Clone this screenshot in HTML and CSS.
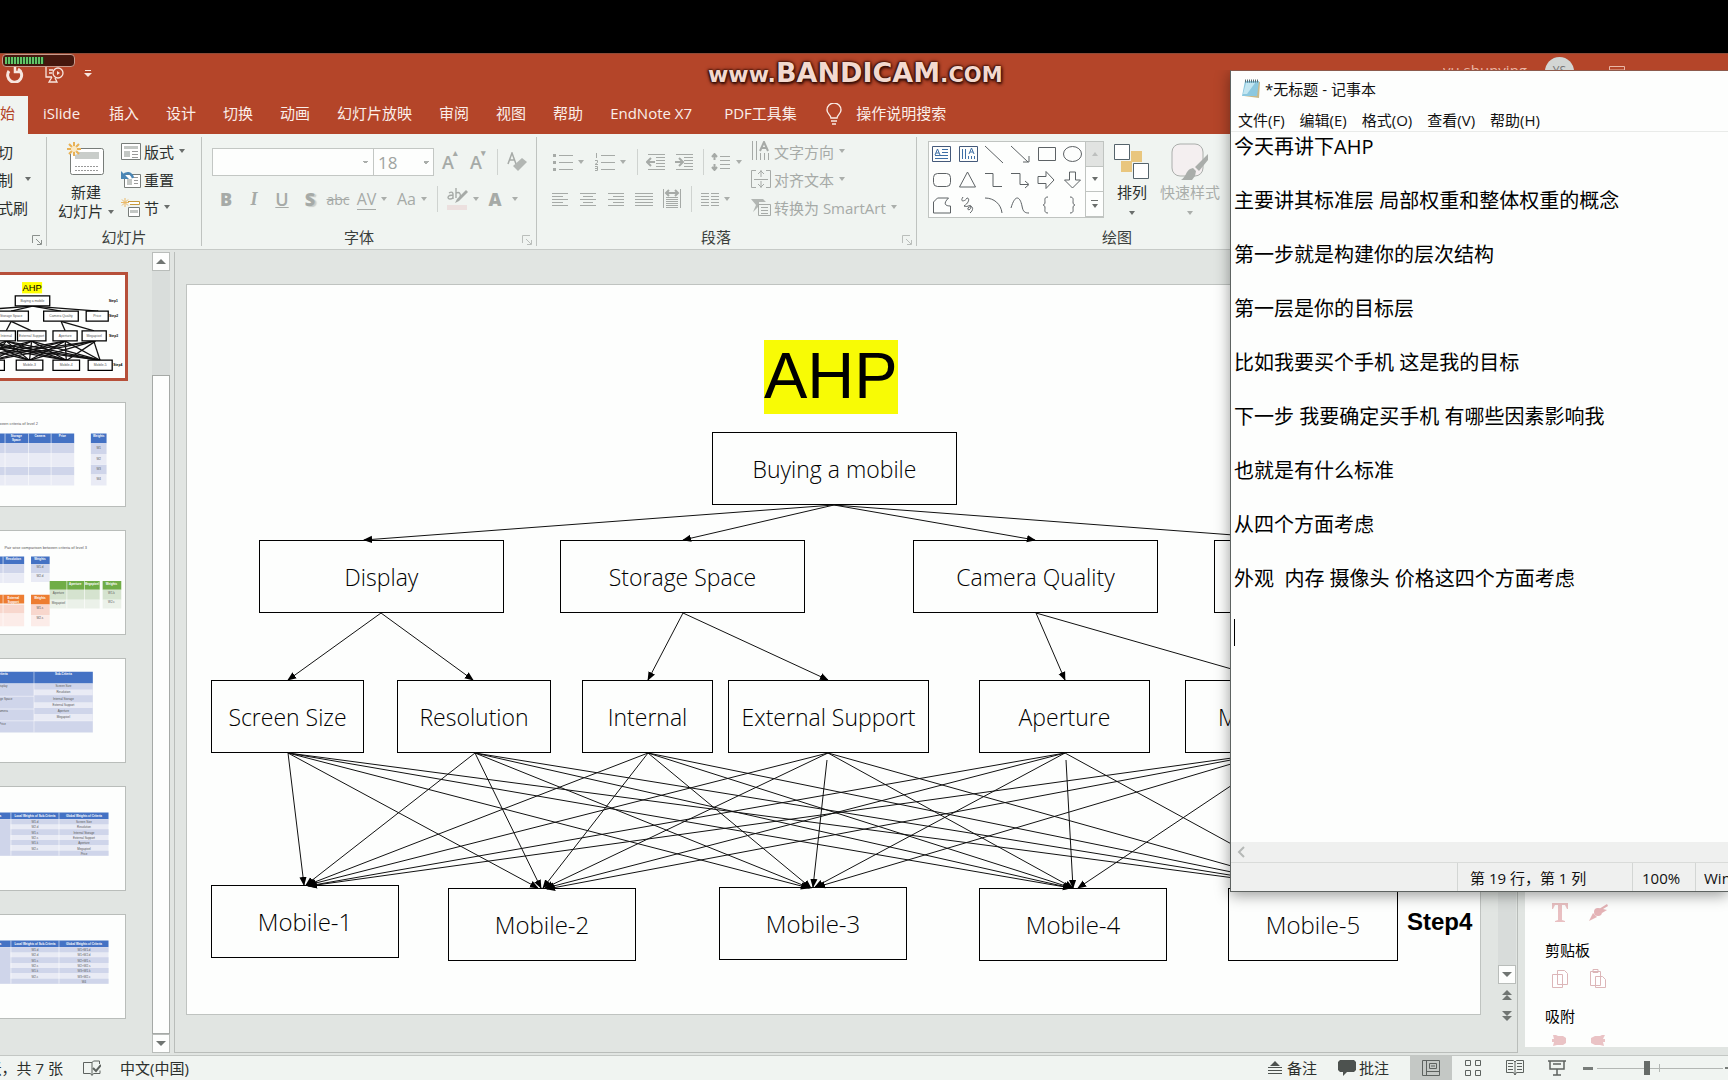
FILE: index.html
```html
<!DOCTYPE html>
<html lang="zh-CN">
<head>
<meta charset="utf-8">
<title>AHP - PowerPoint</title>
<link rel="stylesheet" href="styles.css">
</head>
<body>
<svg class="defs" width="0" height="0" aria-hidden="true">
  <defs>
    <marker id="tip" viewBox="0 0 10 10" refX="9" refY="5" markerWidth="9" markerHeight="9" markerUnits="userSpaceOnUse" orient="auto"><path d="M0 1 10 5 0 9z"/></marker>
    <g id="links" fill="none" stroke="#111">
      <g>
        <path marker-end="url(#tip)" d="M834 505 364 540"/><path marker-end="url(#tip)" d="M834 505 683 540"/><path marker-end="url(#tip)" d="M834 505 1035 540"/><path marker-end="url(#tip)" d="M834 505 1300 540"/>
        <path marker-end="url(#tip)" d="M381 613 288 680"/><path marker-end="url(#tip)" d="M381 613 473 680"/><path marker-end="url(#tip)" d="M683 613 648 680"/><path marker-end="url(#tip)" d="M683 613 828 680"/><path marker-end="url(#tip)" d="M1036 613 1065 680"/><path marker-end="url(#tip)" d="M1036 613 1270 680"/>
        <path marker-end="url(#tip)" d="M288 753 304 885"/><path marker-end="url(#tip)" d="M288 753 538 888"/><path marker-end="url(#tip)" d="M288 753 809 888"/><path marker-end="url(#tip)" d="M288 753 1071 888"/><path marker-end="url(#tip)" d="M288 753 1310 888"/>
        <path marker-end="url(#tip)" d="M475 753 306 885"/><path marker-end="url(#tip)" d="M475 753 541 888"/><path marker-end="url(#tip)" d="M475 753 810 888"/><path marker-end="url(#tip)" d="M475 753 1071 888"/><path marker-end="url(#tip)" d="M475 753 1310 888"/>
        <path marker-end="url(#tip)" d="M648 753 307 885"/><path marker-end="url(#tip)" d="M648 753 543 888"/><path marker-end="url(#tip)" d="M648 753 811 888"/><path marker-end="url(#tip)" d="M648 753 1072 888"/><path marker-end="url(#tip)" d="M648 753 1310 888"/>
        <path marker-end="url(#tip)" d="M828 753 308 885"/><path marker-end="url(#tip)" d="M828 753 545 888"/><path marker-end="url(#tip)" d="M827 760 813 887"/><path marker-end="url(#tip)" d="M828 753 1073 888"/><path marker-end="url(#tip)" d="M828 753 1310 888"/>
        <path marker-end="url(#tip)" d="M1065 753 308 886"/><path marker-end="url(#tip)" d="M1065 753 546 888"/><path marker-end="url(#tip)" d="M1065 753 815 887"/><path marker-end="url(#tip)" d="M1066 760 1073 888"/><path marker-end="url(#tip)" d="M1065 753 1312 888"/>
        <path marker-end="url(#tip)" d="M1268 753 309 886"/><path marker-end="url(#tip)" d="M1268 753 547 889"/><path marker-end="url(#tip)" d="M1268 753 817 887"/><path marker-end="url(#tip)" d="M1280 753 1078 888"/><path marker-end="url(#tip)" d="M1268 753 1312 888"/>
      </g>
    </g>
    <g id="weights-grid">
      <path fill="#4472c4" d="M-61 26H110V33H-61z"/>
      <path fill="#e9ebf5" d="M-61 33H110V70H-61z"/>
      <path fill="#cfd5ea" d="M-61 33H10V70H-61zM10 33H110V38H10zM10 43H110V49H10zM10 54H110V59H10zM10 65H110V70H10z"/>
      <path stroke="#fff" d="M10.500 26V70M59.500 26V70" stroke-width=".6"/>
      <g class="th"><text x="-8" y="31">Sub-Criteria</text><text x="35" y="31">Local Weights of Sub-Criteria</text><text x="85" y="31">Global Weights of Criteria</text></g>
      <g class="td"><text x="35" y="37">W1.d</text><text x="35" y="42">W2.d</text><text x="35" y="48">W1.s</text><text x="35" y="53">W2.s</text><text x="35" y="58">W1.k</text><text x="35" y="64">W2.c</text></g>
    </g>
  </defs>
</svg>

<div class="app">
  <div class="blackbar"></div>

  <header class="titlebar">
    <div class="quick">
      <button aria-label="重做"><svg width="18" height="18" viewBox="0 0 18 18" fill="none" stroke="#f7e6df" stroke-width="3"><path d="M3 6a7 7 0 1 0 9-2"/><path d="M9 1v6h7" stroke-width="2.500"/></svg></button>
      <button aria-label="从头开始"><svg width="20" height="18" viewBox="0 0 20 18" fill="none" stroke="#f7e6df" stroke-width="1.300"><path d="M0 1h17M2 1v11h6M5 5h4M5 8h3M8 12l-3 5h8l-2-4"/><circle cx="14" cy="8" r="5"/><path d="M13 6v4l3-2z" fill="#f7e6df" stroke="none"/></svg></button>
      <button aria-label="自定义"><svg width="8" height="8" viewBox="0 0 8 8"><path d="M1 0h6v1H1zM0 3h8L4 7z" fill="#f7e6df"/></svg></button>
    </div>
    <div class="bandicam">www.<b>BANDICAM</b>.<small>COM</small></div>
    <div class="account"><span>yu shunying</span><i class="avatar">YS</i>
      <svg width="16" height="12" viewBox="0 0 16 12" fill="none" stroke="#eab7a6"><path d="M.5.5h15v11H.5zM.5 4h15"/></svg>
    </div>
    <div class="meter"><span></span></div>
  </header>

  <nav class="tabs">
    <button class="home"><span>开始</span></button><button class="islide">iSlide</button><button>插入</button><button>设计</button><button>切换</button><button>动画</button><button>幻灯片放映</button><button>审阅</button><button>视图</button><button>帮助</button><button class="endnote">EndNote X7</button><button class="pdf">PDF工具集</button>
    <button class="tell"><svg width="16" height="22" viewBox="0 0 16 22" fill="none" stroke="#f9eae4" stroke-width="1.400"><path d="M5 15c0-3-4-4-4-8a7 7 0 0 1 14 0c0 4-4 5-4 8zM5 18h6M6 21h4"/></svg>操作说明搜索</button>
  </nav>

  <section class="ribbon">
    <div class="group clip">
      <div class="stack"><button><span>剪切</span></button><button><span>复制</span><i class="dd"></i></button><button><span>格式刷</span></button></div>
      <footer><svg class="launch" viewBox="0 0 10 10"><path d="M.5 8V.5H8M4 4l5 5M9.500 5v4.500H5"/></svg></footer>
    </div>

    <div class="group slides">
      <div class="content">
        <button class="big"><svg width="38" height="34" viewBox="0 0 38 34"><rect x="3.500" y="6.500" width="33" height="26" rx="2" fill="#fff" stroke="#777c79"/><path fill="#c9cdca" d="M8 10h24v7H8z"/><path stroke="#999" stroke-dasharray="2 1" d="M8 24.500h24M8 28.500h24"/><circle cx="7" cy="7" r="6" fill="#f0f4f1"/><g stroke="#e8b155" stroke-width="2"><path d="M7 0v14M0 7h14M2 2l10 10M12 2 2 12"/></g><circle cx="7" cy="7" r="3" fill="#fbe9c3"/></svg>新建<br>幻灯片<i class="dd"></i></button>
        <div class="stack">
          <button><svg width="20" height="17" viewBox="0 0 20 17"><path d="M.5.5h19v16H.5z" fill="#fff" stroke="#777c79"/><path fill="#c3c7c4" d="M3 3h14v3H3zM3 8h6v6H3z"/><path stroke="#999" d="M11 8.500h6M11 11.500h6M11 14.500h6"/></svg>版式<i class="dd"></i></button>
          <button><svg width="20" height="17" viewBox="0 0 20 17"><path d="M3.500 3.500h16v13h-16z" fill="#fff" stroke="#777c79"/><path fill="#c3c7c4" d="M6 8h5v6H6z"/><path stroke="#999" d="M12 6.500h5M13 9.500h4M13 12.500h4"/><path d="M2 5c3-4 8-4 10 2" fill="none" stroke="#4a86b5" stroke-width="2.500"/><path fill="#4a86b5" d="M0 0v8h8z"/></svg>重置</button>
          <button><svg width="20" height="19" viewBox="0 0 20 19" fill="#fff" stroke="#777c79"><path d="M7.500 9.500h11v9h-11z"/><path fill="#c3c7c4" stroke="none" d="M9 12h8v3H9z"/><path d="M7 3.500h11.500v3H9" stroke="#c79a3e"/><path stroke="#eab968" d="M4 0v9M0 4.500h8M1 1.500l6 6M7 1.500l-6 6"/></svg>节<i class="dd"></i></button>
        </div>
      </div>
      <footer>幻灯片</footer>
    </div>

    <div class="group font dim">
      <div class="content rows">
        <div class="row">
          <select class="family" aria-label="字体"><option></option></select><select class="size" aria-label="字号"><option>18</option></select>
          <button class="b28 glyph">A<sup>▴</sup></button><button class="b28 glyph">A<sup>▾</sup></button><i class="sep"></i>
          <button class="b28"><svg width="20" height="20" viewBox="0 0 20 20"><path fill="none" stroke="#a6aaa7" stroke-width="1.500" d="M1 12 5 1l4 11M2 8h6"/><path fill="#b2b6b3" d="m6 14 9-8 5 4-9 9z"/></svg></button>
        </div>
        <div class="row">
          <button class="b28 glyph"><b>B</b></button><button class="b28 glyph"><em>I</em></button><button class="b28 glyph"><u>U</u></button><button class="b28 glyph sh"><b>S</b></button><button class="b28 abc"><s>abc</s></button>
          <button class="b40 glyph av"><span>AV</span><i class="dd"></i></button><button class="b40 aa">Aa<i class="dd"></i></button><i class="sep"></i>
          <button class="b40"><svg width="21" height="22" viewBox="0 0 21 22"><path fill="#ece0df" d="M0 17h20v5H0z"/><path d="m8 15 2-4 9-9 2 2-9 9z" fill="#a6aaa7"/><path fill="none" stroke="#a6aaa7" stroke-width="1.400" d="M2 5c3-2 4 0 4 1v5M6 7c-6 0-6 4-3 4 2 0 3-1 3-2M9 0v10M9 5c4-2 5 2 4 4"/></svg><i class="dd"></i></button>
          <button class="b40 glyph"><b>A</b><i class="dd wide"></i></button>
        </div>
      </div>
      <footer>字体<svg class="launch" viewBox="0 0 10 10"><path d="M.5 8V.5H8M4 4l5 5M9.500 5v4.500H5"/></svg></footer>
    </div>

    <div class="group para dim">
      <div class="content">
        <div class="rows">
          <div class="row">
            <button class="b45"><svg width="20" height="18" viewBox="0 0 20 18"><path d="M6 2.500h14M6 9.500h14M6 16.500h14"/><path stroke-width="3" d="M0 2.500h3M0 9.500h3M0 16.500h3"/></svg><i class="dd"></i></button>
            <button class="b42"><svg width="20" height="18" viewBox="0 0 20 18"><path d="M6 2.500h14M6 9.500h14M6 16.500h14M1.500 0v5M0 7.500h2.500v2L0 11.500h3M0 13.500h2.500v4H0M0 15.500h2"/></svg><i class="dd"></i></button><i class="sep"></i>
            <button class="b28"><svg width="20" height="18" viewBox="0 0 20 18"><path d="M2 1.500h17M10 4.500h9M10 7.500h9M10 10.500h9M10 13.500h9M2 16.500h17"/><path stroke-width="2" d="M9 9H2M5 5 1 9l4 4"/></svg></button>
            <button class="b28"><svg width="20" height="18" viewBox="0 0 20 18"><path d="M2 1.500h17M10 4.500h9M10 7.500h9M10 10.500h9M10 13.500h9M2 16.500h17"/><path stroke-width="2" d="M1 9h7M5 5l4 4-4 4"/></svg></button><i class="sep"></i>
            <button class="b36"><svg width="20" height="18" viewBox="0 0 20 18"><path d="M9 3.500h10M9 7.500h10M9 11.500h10M9 15.500h10"/><path stroke-width="2" d="M3.500 1v6M3.500 11v6M1 4l2.500-3L6 4M1 14l2.500 3L6 14"/></svg><i class="dd"></i></button>
          </div>
          <div class="row">
            <button class="b28"><svg width="16" height="14" viewBox="0 0 16 14"><path d="M0 1.500h16M0 4.500h11M0 7.500h16M0 10.500h11M0 13.500h16"/></svg></button>
            <button class="b28"><svg width="16" height="14" viewBox="0 0 16 14"><path d="M0 1.500h16M3 4.500h10M0 7.500h16M3 10.500h10M0 13.500h16"/></svg></button>
            <button class="b28"><svg width="16" height="14" viewBox="0 0 16 14"><path d="M0 1.500h16M5 4.500h11M0 7.500h16M5 10.500h11M0 13.500h16"/></svg></button>
            <button class="b28"><svg width="18" height="14" viewBox="0 0 18 14"><path d="M0 1.500h18M0 4.500h18M0 7.500h18M0 10.500h18M0 13.500h18"/></svg></button>
            <button class="b28"><svg width="18" height="20" viewBox="0 0 18 20"><path d="M.5 0v19M17.500 0v19M3 8.500h12M3 10.500h12M3 12.500h12M3 14.500h12M3 16.500h12M3 18.500h12"/><path stroke-width="2" d="M3 4h12M6 1 3 4l3 3M12 1l3 3-3 3"/></svg></button><i class="sep"></i>
            <button class="b36"><svg width="18" height="14" viewBox="0 0 18 14"><path d="M0 1.500h8M0 4.500h8M0 7.500h8M0 10.500h8M0 13.500h8M10 1.500h8M10 4.500h8M10 7.500h8M10 10.500h8M10 13.500h8"/></svg><i class="dd"></i></button>
          </div>
        </div>
        <div class="stack">
          <button><svg width="20" height="20" viewBox="0 0 20 20"><path d="M1.500 0v19M5.500 0v19M9.500 12v7M13.500 12v7M17.500 12v7"/><path stroke-width="2" d="m9 10 4-9 4 9M10 7h6"/></svg>文字方向<i class="dd"></i></button>
          <button><svg width="20" height="18" viewBox="0 0 20 18"><path d="M5 .5H.5v17H5M15 .5h4.500v17H15M3 9.500h14M10 0v7M10 11v7M7 4l3-3 3 3M7 14l3 3 3-3"/></svg>对齐文本<i class="dd"></i></button>
          <button><svg width="20" height="18" viewBox="0 0 20 18"><path fill="#b2b6b3" stroke="none" d="M0 1h12l3 3H8v4l-6 6 3-7z"/><path d="M7.500 6.500h12v11h-12zM10 9.500h7M10 12.500h7M10 15.500h7"/></svg>转换为 SmartArt<i class="dd"></i></button>
        </div>
      </div>
      <footer>段落<svg class="launch" viewBox="0 0 10 10"><path d="M.5 8V.5H8M4 4l5 5M9.500 5v4.500H5"/></svg></footer>
    </div>

    <div class="group draw">
      <div class="content">
        <div class="gallery">
          <svg width="157" height="77" viewBox="0 0 157 77" fill="none" stroke="#5d6265">
            <path stroke="#44597a" d="M4.500 5.500h18v15h-18zM31.500 5.500h18v15h-18z"/>
            <path stroke="#3d6ea5" d="m7 14 2.500-6 2.500 6M8 12h3M14 8.500h6M14 11.500h6M7 14.500h13M7 17.500h13M34.500 8v10M37.500 8v10M40.500 15v3M43.500 15v3M46.500 15v3M41 13l2.500-6 2.500 6M42 11h3" />
            <path d="m57 5 18 17M83 5l17 16M101 15v6h-6M110.500 6.500h17v13h-17z"/><ellipse cx="144.500" cy="13" rx="9" ry="7.500"/>
            <rect x="5.500" y="32.500" width="17" height="13" rx="4"/><path d="m39.500 31 8 15h-16zM57 32.500h8v13h9M83 32.500h9v11h8M97 40l4 3.500-4 3.500M110 35.500h8v-5l8 8.500-8 8.500v-5h-8zM141.500 31v8h-5l8 8 8-8h-5v-8z"/>
            <path d="M5.500 72v-11l4-4h11c-6 6-3 8 2 8v7zM35 56c-4 6 3 4 4 1 3 0 2 5-3 8 4 2 7-3 7 1 0 3-4 4-3 1 4-4 7 1 2 5M57 57c9 0 16 6 17 15M83 67c4-14 9-12 11-2 1 6 3 7 7 7M120 56c-4 0-3 3-3 5 0 2-1 3-2 3 1 0 2 1 2 3 0 2-1 5 3 5M142 56c4 0 3 3 3 5 0 2 1 3 2 3-1 0-2 1-2 3 0 2 1 5-3 5" />
          </svg>
          <div class="gscroll"><button class="off" aria-label="上"><i class="dd up"></i></button><button aria-label="下"><i class="dd"></i></button><button class="more" aria-label="更多"><i class="dd"></i></button></div>
        </div>
        <button class="tall"><svg width="36" height="36" viewBox="0 0 36 36"><path fill="#e9c67e" d="M17 7h11v11H17zM7 17h11v11H7z"/><path fill="#fff" stroke="#55636b" d="M.5.5h15v15H.5zM19.500 19.500h15v15h-15z"/></svg>排列<i class="dd"></i></button>
        <button class="tall faded"><svg width="38" height="38" viewBox="0 0 38 38"><rect x="1" y="1" width="31" height="32" rx="8" fill="#f4eff0" stroke="#aaaeab"/><path fill="#a9adaa" d="m19 26 3-1 3 3-1 5-3 4H10c5-3 5-9 9-11zM24 24l13-13v6L28 28z"/></svg>快速样式<i class="dd"></i></button>
      </div>
      <footer>绘图</footer>
    </div>
  </section>

  <main class="work">
    <aside class="thumbs">
      <ol>
        <li class="on"><svg viewBox="187 285 1294 729">
          <path fill="#ff0" d="M760 335H902V415H760z"/><text x="831" y="400" font-size="66">AHP</text>
          <g stroke-width="9"><use href="#links"/></g>
          <path fill="#fff" stroke="#000" stroke-width="9" d="M712 432H956V504H712zM259 540H504V612H259zM560 540H805V612H560zM913 540H1158V612H913zM1214 540H1370V612H1214zM211 680H364V752H211zM397 680H551V752H397zM582 680H713V752H582zM728 680H929V752H728zM979 680H1150V752H979zM1185 680H1356V752H1185zM211 885H398V957H211zM448 888H635V960H448zM719 887H907V959H719zM979 888H1167V960H979zM1228 888H1398V960H1228z"/>
          <g font-size="24" fill="#555"><text x="834" y="476">Buying a mobile</text><text x="683" y="584">Storage Space</text><text x="1036" y="584">Camera Quality</text><text x="1292" y="584">Price</text><text x="648" y="724">Internal</text><text x="828" y="724">External Support</text><text x="1065" y="724">Aperture</text><text x="1270" y="724">Megapixel</text><text x="813" y="932">Mobile-3</text><text x="1073" y="932">Mobile-4</text><text x="1313" y="932">Mobile-5</text></g>
          <g font-size="24" font-weight="bold"><text x="1406" y="476">Step1</text><text x="1408" y="584">Step2</text><text x="1408" y="724">Step3</text><text x="1438" y="932">Step4</text></g>
        </svg></li>
        <li><svg viewBox="-61 0 187 105">
          <text class="cap" x="-4" y="22">Pair wise comparison between criteria of level 2</text>
          <path fill="#4472c4" d="M-61 31H75V41H-61zM92 31h16v10H92z"/><path fill="#cfd5ea" d="M-61 41H75V51H-61zM-61 65H75V74H-61zM92 41h16v11H92zM92 63h16v10H92z"/><path fill="#e9ebf5" d="M-61 51H75V65H-61zM-61 74H75V84H-61zM92 52h16v11H92zM92 73h16v11H92z"/>
          <path stroke="#fff" stroke-width=".6" d="M4.500 31V84M28.500 31V84M51.500 31V84"/>
          <g class="th"><text x="16" y="35">Storage</text><text x="16" y="39">Space</text><text x="40" y="35">Camera</text><text x="63" y="35">Price</text><text x="100" y="35">Weights</text></g>
          <g class="td"><text x="100" y="47">W1</text><text x="100" y="58">W2</text><text x="100" y="68">W3</text><text x="100" y="79">W4</text></g>
        </svg></li>
        <li><svg viewBox="-61 0 187 105">
          <text class="cap" x="46" y="18">Pair wise comparison between criteria of level 3</text>
          <path fill="#4472c4" d="M-61 26H24V34H-61zM31 26h19v8H31z"/><path fill="#cfd5ea" d="M-61 34H24V43H-61zM31 34h19v9H31z"/><path fill="#e9ebf5" d="M-61 43H24V53H-61zM31 43h19v9H31z"/>
          <path fill="#70ad47" d="M50 51h51v9H50zM104 51h19v9h-19z"/><path fill="#d5e3cf" d="M50 60h51v10H50zM104 60h19v10h-19z"/><path fill="#ebf1e9" d="M50 70h51v9H50zM104 70h19v9h-19z"/>
          <path fill="#ed7d31" d="M-61 65H24V74H-61zM31 65h19v10H31z"/><path fill="#f8d7cd" d="M-61 75H24V84H-61zM31 75h19v11H31z"/><path fill="#fcece8" d="M-61 84H24V97H-61zM31 86h19v11H31z"/>
          <path stroke="#fff" stroke-width=".6" d="M2.500 26V53M2.500 65V97M67.500 51V79M85.500 51V79"/>
          <g class="th"><text x="13" y="30">Resolution</text><text x="40" y="30">Weights</text><text x="76" y="55">Aperture</text><text x="93" y="55">Megapixel</text><text x="113" y="55">Weights</text><text x="13" y="69">External</text><text x="13" y="73">Support</text><text x="40" y="69">Weights</text></g>
          <g class="td"><text x="40" y="38">W1.d</text><text x="40" y="47">W2.d</text><text x="59" y="64">Aperture</text><text x="59" y="74">Megapixel</text><text x="113" y="64">W1.k</text><text x="113" y="73">W2.c</text><text x="40" y="80">W1.s</text><text x="40" y="90">W2.s</text></g>
        </svg></li>
        <li><svg viewBox="-61 0 187 105">
          <path fill="#4472c4" d="M-61 13H94V25H-61z"/><path fill="#cfd5ea" d="M-61 25H94V75H-61z"/><path fill="#e9ebf5" d="M34 31h60v6H34zM34 44h60v6H34zM34 56h60v7H34z"/><path stroke="#fff" stroke-width=".5" d="M34 13V75M-61 38H34M-61 51H34M-61 63H94"/>
          <g class="th"><text x="2" y="16">Criteria</text><text x="64" y="16">Sub-Criteria</text></g>
          <g class="td"><text x="2" y="29">Display</text><text x="2" y="42">Storage Space</text><text x="2" y="54">Camera</text><text x="2" y="67">Price</text><text x="64" y="29">Screen Size</text><text x="64" y="35">Resolution</text><text x="64" y="42">Internal Storage</text><text x="64" y="48">External Support</text><text x="64" y="54">Aperture</text><text x="64" y="60">Megapixel</text></g>
        </svg></li>
        <li><svg viewBox="-61 0 187 105"><use href="#weights-grid"/><g class="td"><text x="85" y="37">Screen Size</text><text x="85" y="42">Resolution</text><text x="85" y="48">Internal Storage</text><text x="85" y="53">External Support</text><text x="85" y="58">Aperture</text><text x="85" y="64">Megapixel</text><text x="85" y="69">Price</text></g></svg></li>
        <li><svg viewBox="-61 0 187 105"><use href="#weights-grid"/><g class="td"><text x="85" y="37">W1×W1.d</text><text x="85" y="42">W1×W2.d</text><text x="85" y="48">W2×W1.s</text><text x="85" y="53">W2×W2.s</text><text x="85" y="58">W3×W1.k</text><text x="85" y="64">W3×W2.c</text><text x="85" y="69">W4</text></g></svg></li>
      </ol>
      <div class="vbar left"><button aria-label="上滚"><i class="tri up"></i></button><span class="track"></span><span class="knob"></span><button aria-label="下滚"><i class="tri"></i></button></div>
    </aside>

    <section class="stage">
      <div class="slide">
        <h1>AHP</h1>
        <div class="node l1 n-goal">Buying a mobile</div>
        <div class="node l1 r2 n-display">Display</div><div class="node l1 r2 n-storage">Storage Space</div><div class="node l1 r2 n-camera">Camera Quality</div><div class="node r2 n-price">Price</div>
        <div class="node r3 n-screen">Screen Size</div><div class="node r3 n-res">Resolution</div><div class="node r3 n-int">Internal</div><div class="node r3 n-ext">External Support</div><div class="node r3 n-ap">Aperture</div><div class="node r3 n-mega">Megapixel</div>
        <div class="node r4 n-m1">Mobile-1</div><div class="node r4 n-m2">Mobile-2</div><div class="node r4 n-m3">Mobile-3</div><div class="node r4 n-m4">Mobile-4</div><div class="node r4 n-m5">Mobile-5</div>
        <strong class="step">Step4</strong>
        <svg class="wires" viewBox="187 285 1294 729"><use href="#links"/></svg>
      </div>
      <div class="vbar right"><span class="track"></span><button aria-label="下滚"><i class="tri"></i></button>
        <button class="bare" aria-label="上一张"><i class="tri up"></i><i class="tri up"></i></button><button class="bare" aria-label="下一张"><i class="tri"></i><i class="tri"></i></button></div>
    </section>

    <aside class="tools">
      <div class="icons first"><svg width="96" height="8" viewBox="0 0 96 8" fill="none" stroke="#e4b9bc" stroke-width="1.500"><path d="M5 0v6h12V0M43 0v6h12V0M79 0v6h4V3h5v3h4V0"/></svg></div>
      <div class="icons"><svg width="60" height="20" viewBox="0 0 60 20"><path fill="#e9c0c2" d="M1 0h16v6h-1l-2-4h-3v15l3 1v1H4v-1l3-1V2H4L2 6H1z"/><g fill="#e4b3b6"><circle cx="47" cy="9" r="4"/><path d="m38 18 4-8 4 4zM48 6l8-5 1 2-5 3 4 1-5 3zM43 6l-2-2M50 12l2 4"/></g></svg></div>
      <h2>剪贴板</h2>
      <div class="icons"><svg width="60" height="20" viewBox="0 0 60 20" fill="#fff" stroke="#dcb6b8"><path d="M1.500 5.500h10v13h-10zM6.500 1.500h7l3 3v11h-10zM39.500 2.500h10v14h-10zM42 .5h5v3h-5zM44.500 7.500h7l3 3v8h-10z"/></svg></div>
      <h2>吸附</h2>
      <div class="icons last"><svg width="60" height="11" viewBox="0 0 60 11" fill="#eac3c5"><path d="M2 0h3l2 1h5l3 2v5l-3 2H6l-4 1 1-4H1V4h2zM54 0h-3l-2 1h-5l-4 2v5l4 2h5l4 1-1-4h2V4h-2z"/></svg></div>
    </aside>
  </main>

  <footer class="status">
    <span class="count">第 1 张，共 7 张</span>
    <svg class="book" width="18" height="16" viewBox="0 0 18 16" fill="none" stroke="#5d625f"><path d="M9 2.500H.5v11h7l1.500 2 1.500-2h6.500v-3M9 2v13M9 2.500 10.500 1h6v3"/><path stroke-width="2" d="m10 8 3 3 5-6"/></svg>
    <span>中文(中国)</span>
    <span class="spring"></span>
    <button class="note"><svg width="14" height="14" viewBox="0 0 14 14"><path fill="#4d524f" d="m7 0 5 5H2zM0 6h14v1H0zM0 9h14v1H0zM0 12h14v1H0z"/></svg>备注</button>
    <button class="comment"><svg width="18" height="16" viewBox="0 0 18 16"><path fill="#4d524f" d="M2 0h14l2 2v8l-2 2H9l-4 4v-4H2l-2-2V2z"/></svg>批注</button>
    <button class="view on" aria-label="普通"><svg width="18" height="16" viewBox="0 0 18 16"><path d="M.5.5h17v15H.5zM4.500 0v16M4.500 11.500h13M7.500 3.500h7v5h-7zM9 6h4"/></svg></button>
    <button class="view" aria-label="浏览"><svg width="18" height="16" viewBox="0 0 18 16"><path d="M1.500.5h5v5h-5zM11.500.5h5v5h-5zM1.500 10.500h5v5h-5zM11.500 10.500h5v5h-5z"/></svg></button>
    <button class="view" aria-label="阅读"><svg width="18" height="16" viewBox="0 0 18 16"><path d="M9 2 7.500.5h-7v12h7L9 15l1.500-2.500h7V.5h-7zM9 2v13M2 3.500h5M2 6.500h5M2 9.500h5M11 3.500h5M11 6.500h5M11 9.500h5"/></svg></button>
    <button class="view" aria-label="放映"><svg width="18" height="16" viewBox="0 0 18 16"><path stroke-width="1.500" d="M0 1h18M2 1v8h14V1M5 4h8M9 9v6M5 15h8"/></svg></button>
    <button class="zoomout" aria-label="缩小"></button>
    <input class="zoom" type="range" min="0" max="100" value="39" aria-label="缩放">
    <button class="zoomin" aria-label="放大"></button>
  </footer>
</div>

<section class="notepad">
  <header><svg width="20" height="20" viewBox="0 0 20 20"><path fill="#c9b98a" d="M3 17 18 19 19 3l-3-1z"/><path fill="#8cc8df" d="M4 2h14l-2 15H1z"/><path fill="#c3e6f1" d="M5 4h9L6 15H2z"/><path stroke="#5b6f77" stroke-dasharray="1 1" stroke-width="3" d="M4 2h14"/></svg>*无标题 - 记事本</header>
  <nav><button>文件(F)</button><button>编辑(E)</button><button>格式(O)</button><button>查看(V)</button><button>帮助(H)</button></nav>
  <div class="paper">
    <textarea aria-label="正文" wrap="off" spellcheck="false">今天再讲下AHP

主要讲其标准层 局部权重和整体权重的概念

第一步就是构建你的层次结构

第一层是你的目标层

比如我要买个手机 这是我的目标

下一步 我要确定买手机 有哪些因素影响我

也就是有什么标准

从四个方面考虑

外观  内存 摄像头 价格这四个方面考虑
</textarea>
    <i class="caret"></i>
  </div>
  <div class="hbar"><svg width="8" height="12" viewBox="0 0 8 12" fill="none" stroke="#b5b8b6" stroke-width="2"><path d="M7 1 2 6l5 5"/></svg></div>
  <footer><span class="pos">第 19 行，第 1 列</span><span class="pct">100%</span><span class="eol">Windows (CRLF)</span></footer>
</section>
</body>
</html>
```
FILE: styles.css
```css
* { box-sizing: border-box; }
html, body { margin: 0; height: 100%; }
body {
  position: relative;
  overflow: hidden;
  font-family: "Open Sans", "Noto Sans CJK SC", sans-serif;
  font-size: 15px;
  color: #2b2f2d;
  background: #e1e5e2;
}
button { border: 0; padding: 0; margin: 0; background: none; font: inherit; color: inherit; white-space: nowrap; }
svg { display: block; flex: none; }
.defs { position: absolute; }
i { font-style: normal; }

.app { display: flex; flex-direction: column; height: 100vh; }
.blackbar { height: 53px; background: #000; flex: none; }

/* title bar */
.titlebar { position: relative; flex: none; height: 43px; background: #b44529; border-top: 1px solid #8e4a36; display: flex; justify-content: space-between; }
.quick { display: flex; align-items: center; gap: 20px; padding: 0 0 2px 6px; }
.bandicam {
  position: absolute; left: 708px; top: 0; line-height: 37px; white-space: nowrap;
  font-family: "DejaVu Sans", sans-serif; font-weight: 700; font-size: 22px; color: #f3d9cf;
  text-shadow: 0 0 2px #2a0a04, 0 0 4px #3a1008, 1px 2px 3px #3a1008, -1px 0 2px #3a1008;
}
.bandicam b { font-size: 27px; }
.bandicam small { font-size: 21px; }
.account { margin-left: auto; display: flex; align-items: flex-start; color: #eab7a6; width: 285px; height: 18px; overflow: hidden; }
.account span { padding-top: 6px; width: 88px; white-space: nowrap; margin-right: 14px; }
.avatar { width: 29px; height: 29px; margin: 3px 35px 0 0; border-radius: 50%; background: #d3d6d4; color: #777; font-size: 12px; line-height: 28px; text-align: center; }
.account svg { margin-top: 12px; }
.meter { position: absolute; left: 2px; top: 0; width: 73px; height: 13px; border: 1px solid #c99a8b; border-radius: 4px; background: #45170d; padding: 2px; }
.meter span { display: block; width: 39px; height: 7px; background: repeating-linear-gradient(90deg, #62c466 0 2px, #1d3a1b 2px 3px); }

/* tabs */
.tabs { flex: none; height: 38px; background: #b44529; display: flex; color: #fbeee9; }
.tabs button { display: flex; margin-right: 27px; line-height: 35px; }
.tabs .home { width: 28px; margin-right: 15px; background: #f0f4f1; color: #b44529; justify-content: flex-end; overflow: hidden; padding-right: 13px; }
.tabs .islide { width: 40px; margin-right: 26px; }
.tabs .endnote { width: 87px; }
.tabs .pdf { width: 75px; margin-right: 27px; }
.tabs .tell { height: 35px; align-items: center; gap: 14px; }

/* ribbon */
.ribbon { flex: none; height: 116px; display: flex; background: #f0f4f1; border-bottom: 1px solid #c6cac7; padding-top: 3px; overflow: hidden; }
.group { display: flex; flex-direction: column; height: 109px; border-right: 1px solid #bfc3c0; flex: none; }
.group:last-child { border: 0; flex: 1; }
.group footer { position: relative; margin-top: auto; height: 17px; line-height: 17px; text-align: center; color: #3a3e3c; }
.launch { position: absolute; right: 4px; bottom: 1px; width: 10px; height: 10px; fill: none; stroke: #8b908d; }
.dim .launch { stroke: #babebb; }
.content { display: flex; }
.stack { display: flex; flex-direction: column; }
.stack button { display: flex; align-items: center; gap: 3px; height: 28px; }
.dd { display: inline-block; border: 3px solid transparent; border-top: 4px solid #6a6e6c; border-bottom: 0; margin-left: 5px; flex: none; vertical-align: middle; }
.stack .dd { margin-left: 2px; }
.dim .dd, .faded .dd { border-top-color: #aaaeab; }
.dim .content { color: #a6aaa7; }
.dim .content svg { fill: none; stroke: #a6aaa7; }
.dim .content svg [fill]:not([fill="none"]) { stroke: none; }
.clip { width: 47px; }
.clip .stack button { justify-content: flex-end; width: 13px; }
.clip .stack button:nth-child(2) { width: 31px; gap: 10px; }
.clip .stack button:nth-child(3) { width: 28px; }
.slides { width: 155px; }
.big { width: 62px; margin: 4px 4px 0 8px; line-height: 19px; text-align: center; }
.big svg { margin: 0 0 7px 12px; }
.font { width: 335px; }
.rows { display: flex; flex-direction: column; }
.row { display: flex; align-items: center; height: 28px; margin-top: 11px; }
.row + .row { margin-top: 9px; }
.font .row { padding-left: 10px; }
.row button { display: flex; align-items: center; justify-content: center; height: 28px; }
.row .dd { margin-left: 5px; }
.row .wide { margin-left: 10px; }
.b28 { width: 28px; } .b36 { width: 36px; } .b40 { width: 40px; } .b42 { width: 42px; } .b45 { width: 45px; }
.sep { width: 1px; height: 26px; background: #cfd3d0; margin: 0 5px; }
select { appearance: none; height: 28px; border: 1px solid #c3c7c4; border-radius: 0; color: #a0a4a1; font: inherit; font-size: 17px; padding: 0 4px;
  background: linear-gradient(45deg, transparent 50%, #aaaeab 50%) no-repeat right 7px center / 3px 3px, linear-gradient(135deg, #aaaeab 50%, transparent 50%) no-repeat right 4px center / 3px 3px, #fdfefd; }
.family { width: 162px; }
.size { width: 61px; margin-left: -1px; margin-right: 2px; }
.glyph { font-size: 18px; font-weight: 600; }
.glyph sup { font-size: 9px; line-height: 9px; align-self: flex-start; margin-left: -1px; }
.glyph em { font-family: "Liberation Serif", serif; font-weight: 700; }
.sh { text-shadow: 2px 1px 1px #c9cdca; }
.abc { font-size: 14px; }
.av { font-size: 16px; font-weight: 400; }
.av span { border-bottom: 1px solid #a6aaa7; line-height: 20px; }
.aa { font-size: 16px; }
.font footer { padding-right: 20px; }
.para { width: 380px; padding-left: 9px; }
.para .stack { margin-left: 7px; }
.para footer { padding-right: 30px; }
.para > .content > .rows { width: 198px; }
.draw { padding-left: 11px; }
.gallery { display: flex; width: 176px; height: 77px; margin-top: 4px; background: #fdfefd; border: 1px solid #c0c4c1; overflow: hidden; }
.gallery svg { margin: -1px 0 0 -1px; }
.gscroll { width: 18px; border-left: 1px solid #c0c4c1; display: flex; flex-direction: column; }
.gscroll button { flex: 1; border-bottom: 1px solid #c0c4c1; display: flex; flex-direction: column; align-items: center; justify-content: center; }
.gscroll .dd { margin: 0; }
.gscroll .off { background: #e1e3e1; }
.dd.up { transform: rotate(180deg); opacity: .3; }
.more::before { content: ""; width: 7px; height: 1px; margin-bottom: 3px; background: #6a6e6c; }
.tall { display: flex; flex-direction: column; align-items: center; width: 60px; padding-top: 6px; margin-left: -2px; line-height: 20px; }
.tall.faded { color: #aaaeab; }
.tall svg { height: 38px; margin-bottom: 1px; }
.tall .dd { margin: 9px 0 0; }
.draw footer { width: 378px; }

/* workspace */
.work { flex: 1; min-height: 0; display: flex; }
.thumbs { width: 175px; flex: none; display: flex; justify-content: flex-end; border-right: 1px solid #b9bdba; margin: 2px 0; padding-right: 4px; overflow: hidden; }
.thumbs ol { list-style: none; margin: 0; padding: 22px 26px 0 0; display: flex; flex-direction: column; gap: 23px; }
.thumbs li { width: 187px; height: 105px; border: 1px solid #b9bdba; background: #fdfefd; flex: none; }
.thumbs li svg { width: 100%; height: 100%; }
.thumbs li.on { border-color: #b7503a; box-shadow: 0 0 0 2px #b7503a; }
svg text { text-anchor: middle; font-family: "Liberation Sans", sans-serif; }
.th text { font-size: 3px; font-weight: bold; fill: #fff; }
.td text { font-size: 3px; fill: #555; }
text.cap { font-size: 4px; fill: #555; }
.vbar { display: flex; flex-direction: column; width: 18px; flex: none; }
.vbar button { width: 18px; height: 19px; border: 1px solid #b9bdba; background: #fdfefd; display: flex; flex-direction: column; align-items: center; justify-content: center; flex: none; }
.vbar .bare { border: 0; background: none; height: 21px; }
.tri { border: 5px solid transparent; border-top-color: #707572; border-bottom: 0; }
.tri.up { transform: rotate(180deg); }
.left .track { height: 104px; background: #d9dddb; flex: none; }
.left .knob { flex: 1; background: #fdfefd; border: 1px solid #a5a9a6; }
.stage { flex: 1; min-width: 0; display: flex; justify-content: space-between; padding: 0 1px 0 12px; border-right: 1px solid #b9bdba; border-bottom: 1px solid #b9bdba; margin-bottom: 2px; }
.right .track { flex: 1; background: #d8dcda; }
.right { padding-bottom: 26px; }
.slide { position: relative; flex: none; width: 1293px; height: 729px; margin-top: 35px; background: #fdfefd; outline: 1px solid #bfc3c0; }
.wires { position: absolute; left: 0; top: 0; width: 1294px; height: 729px; }
.slide h1 { position: absolute; left: 577px; top: 55px; margin: 0; padding-bottom: 3px; background: #f8fb05; color: #000; font: 65px/71px "Liberation Sans", sans-serif; }
.node { position: absolute; display: grid; place-items: center; height: 73px; border: 1px solid #000; font-size: 23px; font-weight: 300; color: #000; white-space: nowrap; }
.l1 { width: 245px; }
.r2 { top: 255px; } .r3 { top: 395px; } .r4 { top: 603px; width: 188px; font-size: 24px; }
.n-goal { left: 525px; top: 147px; }
.n-display { left: 72px; } .n-storage { left: 373px; } .n-camera { left: 726px; } .n-price { left: 1027px; width: 157px; }
.n-screen { left: 24px; width: 153px; } .n-res { left: 210px; width: 154px; } .n-int { left: 395px; width: 131px; } .n-ext { left: 541px; width: 201px; } .n-ap { left: 792px; width: 171px; } .n-mega { left: 998px; width: 171px; }
.n-m1 { left: 24px; top: 600px; } .n-m2 { left: 261px; } .n-m3 { left: 532px; top: 602px; } .n-m4 { left: 792px; } .n-m5 { left: 1041px; width: 170px; }
.step { position: absolute; left: 1220px; top: 623px; font: bold 24px/28px "Liberation Sans", sans-serif; color: #000; }
.tools { width: 203px; flex: none; margin: 0 0 8px 7px; padding-left: 20px; background: #fdfefd; display: flex; flex-direction: column; justify-content: flex-end; }
.tools h2 { margin: 16px 0 8px; font-size: 15px; font-weight: 400; line-height: 22px; color: #000; }
.tools .icons { padding-left: 6px; }
.tools .first { padding-bottom: 12px; }
.tools .last { padding-bottom: 1px; }

/* status bar */
.status { flex: none; height: 25px; display: flex; align-items: center; background: #f0f4f1; border-top: 1px solid #c3c7c4; line-height: 24px; }
.count { width: 63px; display: flex; justify-content: flex-end; white-space: nowrap; overflow: hidden; }
.book { margin: 0 19px 0 20px; }
.spring { flex: 1; }
.note, .comment { display: flex; align-items: center; gap: 5px; margin-right: 21px; }
.comment { gap: 3px; }
.view { width: 42px; height: 24px; display: grid; place-items: center; }
.view svg { fill: none; stroke: #5d625f; }
.view.on { background: #c4c8c5; }
.zoomout { width: 10px; height: 3px; background: #777c79; margin: 0 4px 0 5px; }
.zoom { appearance: none; width: 126px; height: 24px; margin: 0; background: linear-gradient(#b3b7b4, #b3b7b4) no-repeat center / 100% 1px, linear-gradient(#b3b7b4, #b3b7b4) no-repeat 62px center / 1px 8px; }
.zoom::-webkit-slider-thumb { appearance: none; width: 6px; height: 14px; background: #666b68; }
.zoomin { width: 3px; height: 2px; background: #777c79; margin-left: 2px; }

/* notepad window */
.notepad { position: absolute; left: 1230px; right: 0; top: 70px; height: 822px; display: flex; flex-direction: column; background: #fdfefd; border: 1px solid #5e6361; border-right: 0; border-top-color: #8d5a4c; box-shadow: 0 3px 14px rgba(0,0,0,.4); color: #111; overflow: hidden; clip-path: inset(0 0 -20px -20px); }
.notepad header { display: flex; align-items: center; gap: 4px; height: 35px; padding-left: 10px; }
.notepad nav { display: flex; gap: 15px; height: 26px; padding-left: 7px; border-bottom: 1px solid #e9ebe9; line-height: 28px; }
.paper { position: relative; flex: 1; display: flex; }
textarea { flex: 1; border: 0; outline: 0; resize: none; overflow: hidden; padding: 1px 3px; margin: 0; background: none; font: 20px/27px "Open Sans", "Noto Sans CJK SC", sans-serif; color: #000; }
.caret { position: absolute; left: 3px; top: 487px; width: 1px; height: 27px; background: #000; }
.hbar { height: 20px; background: #eff0ef; padding: 4px 0 0 6px; }
.notepad footer { display: flex; justify-content: flex-end; height: 29px; line-height: 30px; background: #eff0ef; border-top: 1px solid #d9dbd9; white-space: nowrap; }
.notepad footer span { border-left: 1px solid #d3d6d4; }
.pos { width: 175px; padding-left: 12px; }
.pct { width: 63px; padding-left: 9px; }
.eol { width: 33px; padding-left: 8px; overflow: hidden; }
```
